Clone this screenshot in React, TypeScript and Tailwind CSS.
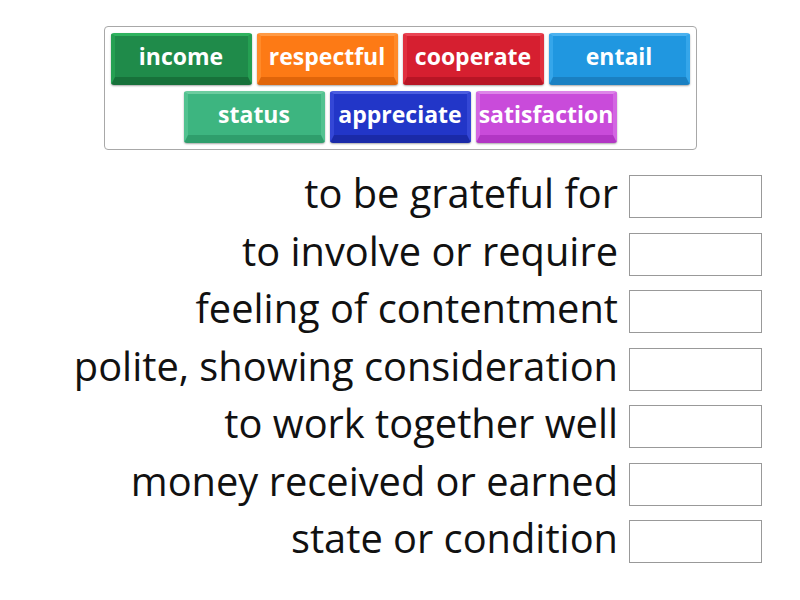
import React from "react";

const tiles1 = [
  { t: "income", bg: "bg-[#1f8b4a]", bt: "border-t-[#2fb35f]", bx: "border-x-[#25a052]", bb: "border-b-[#17713a]" },
  { t: "respectful", bg: "bg-[#fd7a15]", bt: "border-t-[#ff9a45]", bx: "border-x-[#ff8a2a]", bb: "border-b-[#e0650a]" },
  { t: "cooperate", bg: "bg-[#d61f30]", bt: "border-t-[#ea4454]", bx: "border-x-[#e0303f]", bb: "border-b-[#b81525]" },
  { t: "entail", bg: "bg-[#2097e0]", bt: "border-t-[#4cb2ef]", bx: "border-x-[#35a6ea]", bb: "border-b-[#1a80c2]" },
];
const tiles2 = [
  { t: "status", bg: "bg-[#3db580]", bt: "border-t-[#6ccc9f]", bx: "border-x-[#52c290]", bb: "border-b-[#2f9e6c]" },
  { t: "appreciate", bg: "bg-[#2236c8]", bt: "border-t-[#4c5ee0]", bx: "border-x-[#3447d6]", bb: "border-b-[#1a2aa8]" },
  { t: "satisfaction", bg: "bg-[#c94bda]", bt: "border-t-[#dd84e8]", bx: "border-x-[#d366e2]", bb: "border-b-[#b236c4]" },
];

const rows = [
  "to be grateful for",
  "to involve or require",
  "feeling of contentment",
  "polite, showing consideration",
  "to work together well",
  "money received or earned",
  "state or condition",
];

function Tile({ t }: { t: (typeof tiles1)[number] }) {
  return (
    <div
      className={`w-[141px] h-[52px] rounded-[3px] border-x-[4px] border-t-[3px] border-b-[8px] ${t.bg} ${t.bt} ${t.bx} ${t.bb} flex items-center justify-center text-white font-bold text-[23px] leading-none shadow-[0_1px_2px_rgba(0,0,0,0.35)]`}
    >
      {t.t}
    </div>
  );
}

export default function App() {
  return (
    <div
      className="w-[800px] h-[600px] bg-white relative"
      style={{ fontFamily: '"Open Sans", sans-serif' }}
    >
      <div className="pt-[26px] flex justify-center">
        <div className="w-[593px] border border-[#a8a8a8] rounded-[4px] p-[6px] flex flex-col items-center gap-[6px]">
          <div className="flex gap-[5px]">
            {tiles1.map((t) => (
              <Tile key={t.t} t={t} />
            ))}
          </div>
          <div className="flex gap-[5px]">
            {tiles2.map((t) => (
              <Tile key={t.t} t={t} />
            ))}
          </div>
        </div>
      </div>
      <div className="mt-[25px] flex flex-col pr-[38px]">
        {rows.map((r) => (
          <div key={r} className="h-[57.5px] flex items-start justify-end gap-[11px]">
            <div className="text-[39.8px] leading-[35px] text-[#111] whitespace-nowrap">{r}</div>
            <div className="w-[133px] h-[43px] border border-[#999] bg-white shrink-0" />
          </div>
        ))}
      </div>
    </div>
  );
}
